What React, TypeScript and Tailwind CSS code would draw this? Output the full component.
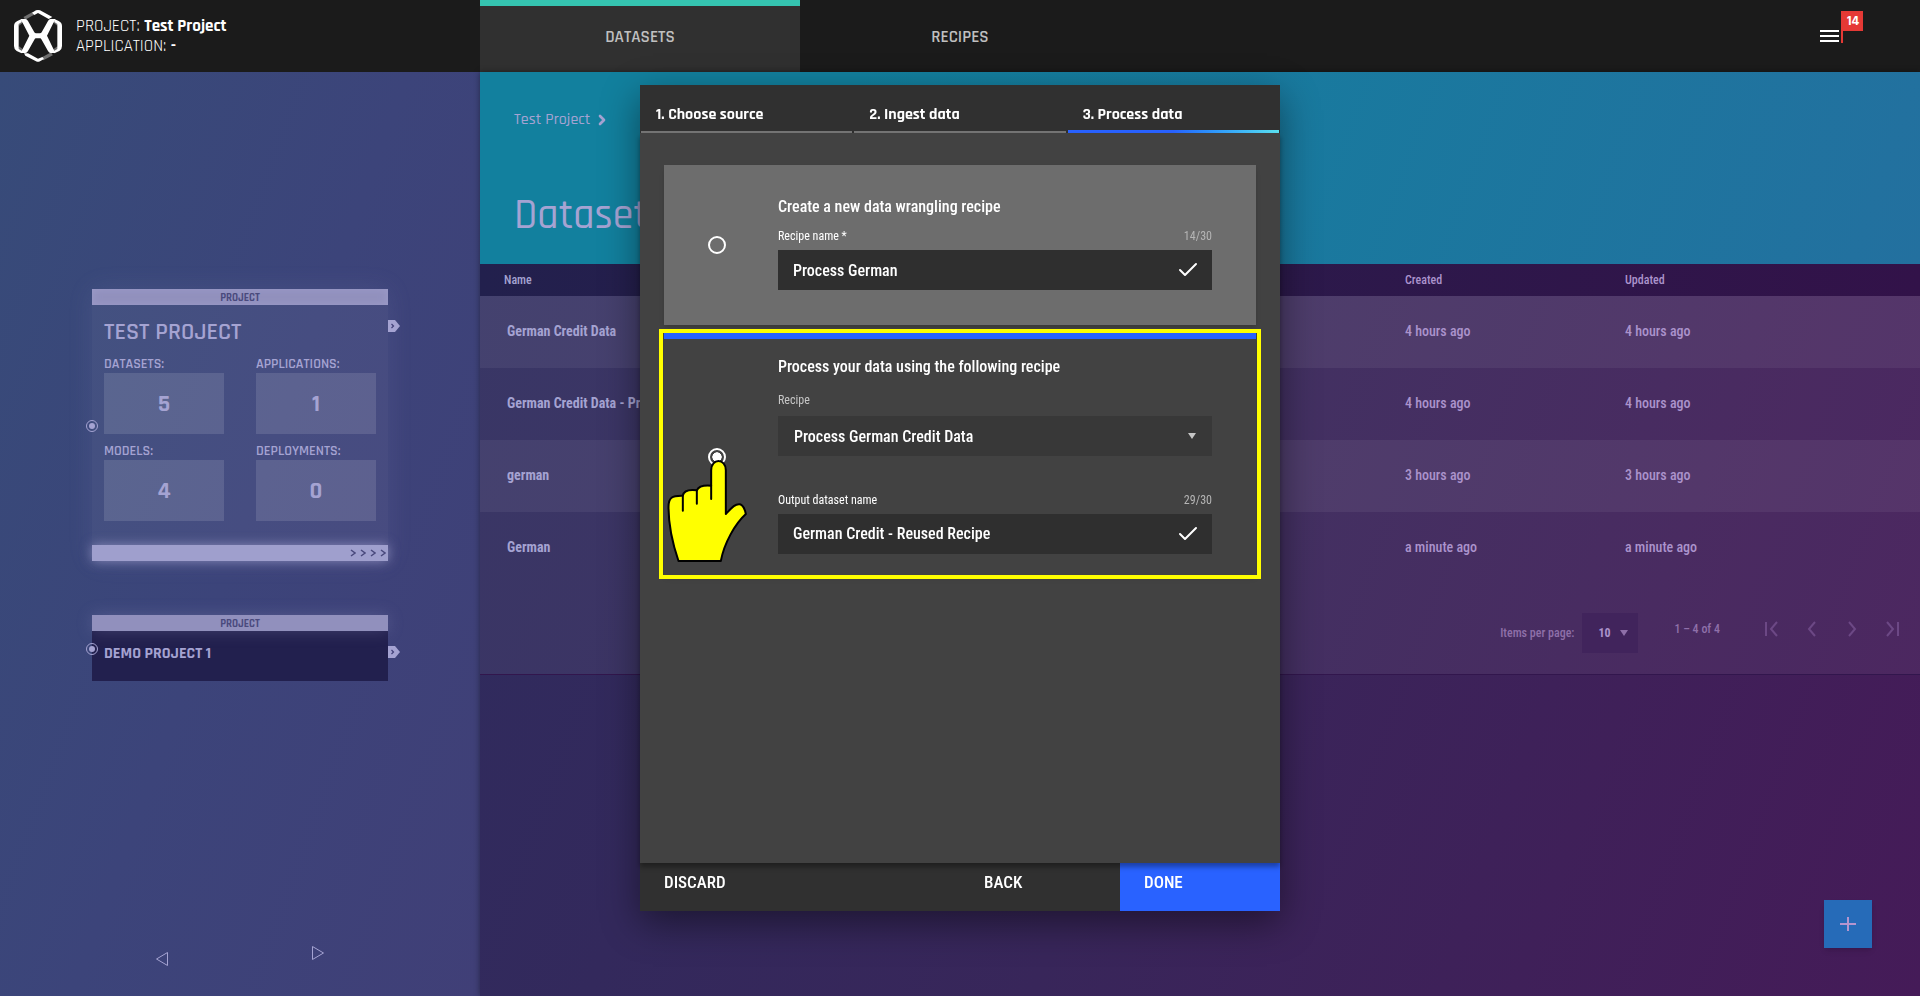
import React from 'react';
import { Check, ChevronRight } from 'lucide-react';

const datasets = [
    { name: 'German Credit Data', created: '4 hours ago', updated: '4 hours ago' },
    { name: 'German Credit Data - Processed', created: '4 hours ago', updated: '4 hours ago' },
    { name: 'german', created: '3 hours ago', updated: '3 hours ago' },
    { name: 'German', created: 'a minute ago', updated: 'a minute ago' }
];

const stats = [
    { label: 'DATASETS:', value: 5 },
    { label: 'APPLICATIONS:', value: 1 },
    { label: 'MODELS:', value: 4 },
    { label: 'DEPLOYMENTS:', value: 0 }
];

const steps = ['1. Choose source', '2. Ingest data', '3. Process data'];

const pagerIcons = [
    { label: 'First page', d: 'M6 5v14M17 5l-6 7 6 7' },
    { label: 'Previous page', d: 'M15 5l-6 7 6 7' },
    { label: 'Next page', d: 'M9 5l6 7-6 7' },
    { label: 'Last page', d: 'M7 5l6 7-6 7M18 5v14' }
];

function Logo() {
    return (
        <svg viewBox="42 30 144 156" className="h-13 w-12" fill="none" aria-hidden="true">
            <g stroke="#6f6f6f" strokeWidth="10">
                <path d="M73 55L100 40" />
                <path d="M156 161L128 176" />
                <path d="M54 73L68 62M175 73L161 62M54 143L68 153M175 143L161 153" />
            </g>
            <g fill="#fff">
                <path d="M96 38L108 31Q114 29 120 31L157 51L146 57L114 39L103 45Z" />
                <path d="M72 160L84 160L114 176L127 171L132 177L120 184Q114 187 108 184L76 167Z" />
                <path d="M65 57L52 63Q42 68 42 78V138Q42 148 50 153L65 160L66 153L56 147V72L65 66Z" />
                <path d="M163 57L176 63Q186 68 186 78V138Q186 148 178 153L163 160L162 153L172 147V72L163 66Z" />
                <path d="M62 57H76Q81 57 84 63L103 97Q105 100 108 100H120Q123 100 125 97L144 63Q147 57 152 57H166L141 107L166 159H152Q147 159 144 153L125 119Q123 115 120 115H108Q105 115 103 119L84 153Q81 159 76 159H62L88 107Z" />
            </g>
        </svg>
    );
}

function PointingHand() {
    return (
        <svg viewBox="36 59 242 309" className="pointer-events-none absolute top-[127px] left-[3px] h-[103px] w-[81px]" aria-hidden="true">
            <g fill="#ff0" stroke="#000" strokeWidth="6" strokeLinejoin="round" strokeLinecap="round">
                <path d="M70 362C55 318 40 265 40 200C40 172 50 165 83 166C86 150 102 147 125 150C131 136 146 134 168 136V90C168 53 212 53 212 90V221C230 202 240 190 254 192C265 195 269 206 272 221C240 250 207 308 197 362Z" />
                <path d="M83 166V211M125 150V190M168 136V176" />
            </g>
        </svg>
    );
}

function NodePort() {
    return (
        <span className="flex size-3 items-center justify-center rounded-full border border-[#a5a3d2]">
            <span className="size-1.5 rounded-full bg-[#a5a3d2]" />
        </span>
    );
}

function NodeTag() {
    return (
        <svg viewBox="0 0 12 12" className="size-3" aria-hidden="true">
            <path d="M0 0H7L12 6L7 12H0Z" fill="#a5a3d2" />
            <path d="M3.5 4L5.5 6L3.5 8" fill="none" stroke="#403f77" strokeWidth="1.2" />
        </svg>
    );
}

function ProjectSidebar() {
    return (
        <aside className="flex w-1/4 flex-col items-center bg-linear-[110deg] from-[#374b79] via-[#3c447a] to-[#403f77] pt-[217px] text-[#a5a3d2]">
            <section className="relative w-[296px] bg-white/5 shadow-[0_0_24px_rgba(165,163,210,0.12)]">
                <div className="h-4 bg-[#9190bd] text-center text-[11px] leading-[18px] font-bold text-[#4a4a7d] shadow-[inset_0_0_10px_rgba(165,163,210,0.6)]">PROJECT</div>
                <div className="px-3 pt-[13px] pb-6">
                    <h2 className="text-2xl leading-7 font-semibold">TEST PROJECT</h2>
                    <dl className="mt-[9px] grid grid-cols-2 gap-x-8 gap-y-2">
                        {stats.map((stat) => (
                            <div key={stat.label}>
                                <dt className="text-sm leading-[18px] font-semibold">{stat.label}</dt>
                                <dd className="flex h-[61px] items-center justify-center bg-white/12 text-2xl font-bold slashed-zero">{stat.value}</dd>
                            </div>
                        ))}
                    </dl>
                </div>
                <div className="flex h-4 items-center justify-end gap-1 bg-[#9f9fcd] pr-0.5 text-[#4a4a7d] shadow-[0_0_12px_rgba(165,163,210,0.7)]">
                    {[0, 1, 2, 3].map((n) => (
                        <svg key={n} viewBox="0 0 6 8" className="h-2 w-1.5" fill="none" stroke="currentColor" strokeWidth="1.5">
                            <path d="M1 1L5 4L1 7" />
                        </svg>
                    ))}
                </div>
                <div className="absolute top-[131px] -left-1.5"><NodePort /></div>
                <div className="absolute top-[31px] -right-3"><NodeTag /></div>
            </section>

            <section className="relative mt-[54px] w-[296px] bg-[#22204e]">
                <div className="h-4 bg-[#9190bd] text-center text-[11px] leading-[18px] font-bold text-[#4a4a7d] shadow-[0_0_16px_rgba(165,163,210,0.25)]">PROJECT</div>
                <h2 className="px-3 pt-[13px] pb-[17px] text-base leading-5 font-bold">DEMO PROJECT 1</h2>
                <div className="absolute top-7 -left-1.5"><NodePort /></div>
                <div className="absolute top-[31px] -right-3"><NodeTag /></div>
            </section>

            <nav className="mt-auto mb-[29px] flex h-[22px] w-[170px] justify-between" aria-label="Projects">
                <button type="button" aria-label="Previous project" className="self-end">
                    <svg viewBox="0 0 14 16" className="h-4 w-3.5" fill="none" stroke="currentColor"><path d="M12.500 1.500V14.500L1.500 8Z" /></svg>
                </button>
                <button type="button" aria-label="Next project" className="self-start">
                    <svg viewBox="0 0 14 16" className="h-4 w-3.5" fill="none" stroke="currentColor"><path d="M1.500 1.500V14.500L12.500 8Z" /></svg>
                </button>
            </nav>
        </aside>
    );
}

function DatasetsPage() {
    return (
        <main className="relative flex flex-1 flex-col bg-linear-[110deg] from-[#2e2c5e] via-[#38265a] to-[#451b58] shadow-[0_0_6px_rgba(0,0,0,0.4)]">
            <div className="h-48 bg-linear-[110deg] from-[#12809e] from-25% to-[#23709f] px-[34px] pt-9 text-[#a5a3d2]">
                <a href="#project" className="flex items-center gap-1 text-base leading-6 font-medium">
                    Test Project
                    <ChevronRight className="size-4" strokeWidth={4} />
                </a>
                <h1 className="mt-[60px] text-[42px] leading-12 font-medium">Datasets</h1>
            </div>

            <div className="border-b border-[#32164d] bg-white/5 font-[family-name:'Roboto_Condensed','Liberation_Sans_Narrow',Roboto,sans-serif] text-[#ab93cc]">
                <table className="w-full table-fixed text-left text-sm">
                    <thead className="h-8 bg-linear-to-r from-[#22204d] to-[#321249] text-xs">
                        <tr>
                            <th className="pl-6 font-medium text-[#a5a3d2]">Name</th>
                            <th className="w-[220px] font-medium">Created</th>
                            <th className="w-[295px] font-medium">Updated</th>
                        </tr>
                    </thead>
                    <tbody>
                        {datasets.map((row) => (
                            <tr key={row.name} className="h-18 odd:bg-white/6">
                                <td className="pb-0.5 pl-[27px] font-bold text-[#a5a3d2]">{row.name}</td>
                                <td className="pb-0.5 font-medium">{row.created}</td>
                                <td className="pb-0.5 font-medium">{row.updated}</td>
                            </tr>
                        ))}
                    </tbody>
                </table>

                <div className="flex h-[90px] items-center justify-end pt-2 pr-2 text-xs text-[#8f70a9]">
                    <label htmlFor="page-size" className="font-medium">Items per page:</label>
                    <div className="relative ml-2">
                        <select id="page-size" defaultValue="10" className="h-10 w-14 appearance-none bg-[#41245c] pl-4 font-bold text-[#ab93cc]">
                            <option>10</option>
                            <option>25</option>
                        </select>
                        <svg viewBox="0 0 8 6" className="pointer-events-none absolute top-[17px] right-2.5 h-1.5 w-2" fill="currentColor"><path d="M0 0H8L4 6Z" /></svg>
                    </div>
                    <span className="mr-8 mb-2 ml-9 font-medium">1 – 4 of 4</span>
                    {pagerIcons.map((icon) => (
                        <button key={icon.label} type="button" aria-label={icon.label} className="mb-2 flex size-10 items-center justify-center text-[#6c4885]">
                            <svg viewBox="0 0 24 24" className="size-6" fill="none" stroke="currentColor" strokeWidth="2"><path d={icon.d} /></svg>
                        </button>
                    ))}
                </div>
            </div>

            <button type="button" aria-label="Add dataset" className="mt-auto mr-12 mb-12 flex size-12 items-center justify-center self-end bg-[#266bb8] text-[#b595cf] shadow-md">
                <svg viewBox="0 0 16 16" className="size-4" fill="none" stroke="currentColor" strokeWidth="2"><path d="M8 1V15M0 8H16" /></svg>
            </button>
        </main>
    );
}

function ProcessDialog() {
    return (
        <div className="fixed inset-0 flex items-center justify-center">
            <div role="dialog" aria-label="Process data" className="flex h-[83vh] w-1/3 flex-col bg-[#303030] text-white shadow-[0_12px_36px_rgba(0,0,0,0.45)]">
                <ol className="grid h-12 grid-cols-3 text-base font-bold">
                    {steps.map((step, index) => (
                        <li key={step} className="relative mx-px flex items-end">
                            <span className="px-[15px] pb-1.5 leading-6">{step}</span>
                            {index === 2 ? (
                                <span className="absolute inset-x-0 bottom-0 h-[3px] bg-linear-to-r from-[#2962ff] via-[#2962ff] to-[#5ce1f0]" />
                            ) : (
                                <span className="absolute inset-x-0 bottom-0 h-0.5 bg-[#757575]" />
                            )}
                        </li>
                    ))}
                </ol>

                <form id="process" className="relative flex-1 bg-[#424242] px-6 pt-8 font-[family-name:'Roboto_Condensed','Liberation_Sans_Narrow',Roboto,sans-serif] shadow-[0_4px_5px_rgba(0,0,0,0.35)]">
                    <section className="flex items-center bg-[#6d6d6d] shadow-md">
                        <div className="flex w-[114px] shrink-0 pl-11">
                            <input type="radio" name="mode" aria-label="Create a new data wrangling recipe" className="size-[18px] appearance-none rounded-full border-2 border-white" />
                        </div>
                        <div className="flex-1 pt-8 pr-11 pb-[35px]">
                            <h3 className="text-base leading-5 font-medium">Create a new data wrangling recipe</h3>
                            <div className="mt-[11px] flex justify-between text-xs leading-4">
                                <label htmlFor="recipe-name">Recipe name *</label>
                                <span className="text-[#b5b5b5]">14/30</span>
                            </div>
                            <div className="relative mt-1.5">
                                <input id="recipe-name" defaultValue="Process German" className="h-10 w-full bg-[#2f2f2f] px-[15px] pt-0.5 text-base font-medium outline-none" />
                                <Check className="absolute top-2 right-3 size-6" strokeWidth={2} />
                            </div>
                        </div>
                    </section>

                    <section className="relative mt-2 bg-[#424242] shadow-md">
                        <div className="h-1.5 bg-[#2962ff]" />
                        <div className="flex items-center">
                            <div className="flex w-[114px] shrink-0 pl-11">
                                <input type="radio" name="mode" defaultChecked aria-label="Process your data using the following recipe" className="size-[18px] appearance-none rounded-full border-2 border-white bg-radial from-white from-45% to-transparent to-50% bg-clip-content p-0.5" />
                            </div>
                            <div className="flex-1 pt-[18px] pr-11 pb-[21px]">
                                <h3 className="text-base leading-5 font-medium">Process your data using the following recipe</h3>
                                <label htmlFor="recipe" className="mt-[15px] block text-xs leading-4 text-[#c6c6c6]">Recipe</label>
                                <div className="relative mt-2">
                                    <select id="recipe" className="h-10 w-full appearance-none bg-[#383838] px-4 pt-0.5 text-base font-medium">
                                        <option>Process German Credit Data</option>
                                    </select>
                                    <svg viewBox="0 0 8 6" className="pointer-events-none absolute top-[17px] right-4 h-1.5 w-2 text-[#c6c6c6]" fill="currentColor"><path d="M0 0H8L4 6Z" /></svg>
                                </div>
                                <div className="mt-9 flex justify-between text-xs leading-4">
                                    <label htmlFor="output-name">Output dataset name</label>
                                    <span className="text-[#b5b5b5]">29/30</span>
                                </div>
                                <div className="relative mt-1.5">
                                    <input id="output-name" defaultValue="German Credit - Reused Recipe" className="h-10 w-full bg-[#2f2f2f] px-[15px] text-base font-medium outline-none" />
                                    <Check className="absolute top-2 right-3 size-6" strokeWidth={2} />
                                </div>
                            </div>
                        </div>
                        {/* Walkthrough highlight */}
                        <div className="pointer-events-none absolute -inset-x-[5px] -inset-y-1 border-4 border-[#ff0]" />
                        <PointingHand />
                    </section>
                </form>

                <footer className="grid h-12 grid-cols-4 font-[family-name:'Roboto_Condensed','Liberation_Sans_Narrow',Roboto,sans-serif] text-[17px] font-medium">
                    <button type="button" className="col-span-2 px-6 pb-2.5 text-left">DISCARD</button>
                    <button type="button" className="px-6 pb-2.5 text-left">BACK</button>
                    <button type="submit" form="process" className="bg-[#2962ff] px-6 pb-2.5 text-left">DONE</button>
                </footer>
            </div>
        </div>
    );
}

export default function App() {
    return (
        <div className="flex min-h-screen flex-col font-[family-name:Rajdhani,Roboto,sans-serif]">
            <header className="flex h-18 bg-[#1b1b1b] text-white">
                <div className="flex w-1/4 items-center gap-3.5 pl-3.5">
                    <Logo />
                    <div className="text-[17px] leading-5">
                        <p>PROJECT: <strong>Test Project</strong></p>
                        <p>APPLICATION: <strong>-</strong></p>
                    </div>
                </div>
                <nav className="flex w-1/3 text-[17px] font-semibold text-[#c0c0c0]">
                    <a href="#datasets" className="flex w-1/2 items-center justify-center border-t-6 border-[#35c4b0] bg-[#303030] pb-0.5">DATASETS</a>
                    <a href="#recipes" className="flex w-1/2 items-center justify-center pt-1">RECIPES</a>
                </nav>
                <button type="button" aria-label="Menu, 14 notifications" className="mr-[57px] ml-auto flex items-start gap-0.5 pt-[11px]">
                    <svg viewBox="0 0 19 12" className="mt-[19px] h-3 w-[19px]" stroke="#fff" strokeWidth="2"><path d="M0 1H19M0 6H19M0 11H19" /></svg>
                    <span className="h-8 border-l-2 border-[#e53935]">
                        <span className="flex h-5 w-5 items-center justify-center bg-[#e53935] text-sm font-bold">14</span>
                    </span>
                </button>
            </header>
            <div className="flex flex-1">
                <ProjectSidebar />
                <DatasetsPage />
            </div>
            <ProcessDialog />
        </div>
    );
}
